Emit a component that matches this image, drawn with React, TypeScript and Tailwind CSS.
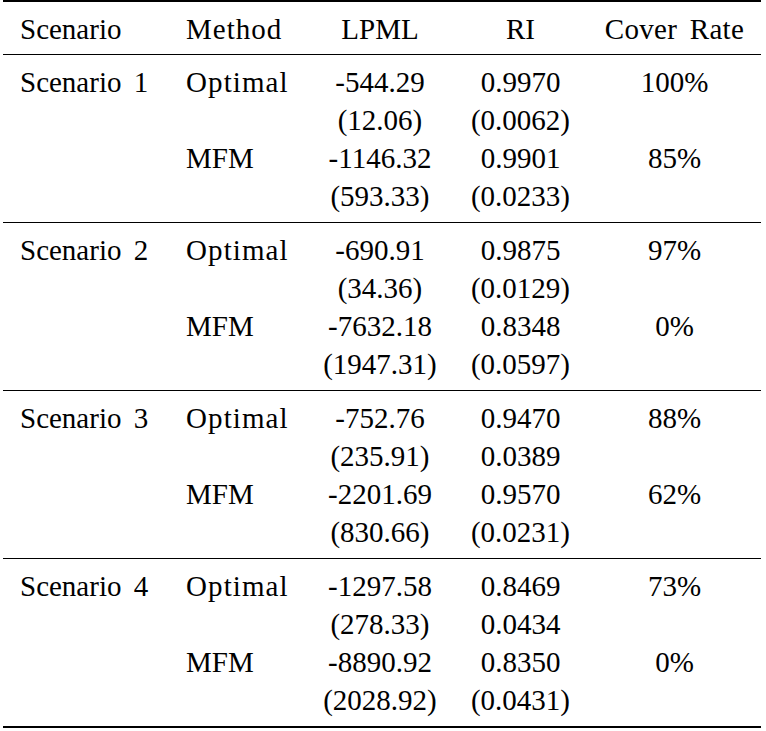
import { Fragment } from 'react'

const sections = [
  {
    name: 'Scenario 1',
    rows: [
      { method: 'Optimal', lpml: '-544.29', lpmlSd: '(12.06)', ri: '0.9970', riSd: '(0.0062)', cover: '100%' },
      { method: 'MFM', lpml: '-1146.32', lpmlSd: '(593.33)', ri: '0.9901', riSd: '(0.0233)', cover: '85%' },
    ],
  },
  {
    name: 'Scenario 2',
    rows: [
      { method: 'Optimal', lpml: '-690.91', lpmlSd: '(34.36)', ri: '0.9875', riSd: '(0.0129)', cover: '97%' },
      { method: 'MFM', lpml: '-7632.18', lpmlSd: '(1947.31)', ri: '0.8348', riSd: '(0.0597)', cover: '0%' },
    ],
  },
  {
    name: 'Scenario 3',
    rows: [
      { method: 'Optimal', lpml: '-752.76', lpmlSd: '(235.91)', ri: '0.9470', riSd: '0.0389', cover: '88%' },
      { method: 'MFM', lpml: '-2201.69', lpmlSd: '(830.66)', ri: '0.9570', riSd: '(0.0231)', cover: '62%' },
    ],
  },
  {
    name: 'Scenario 4',
    rows: [
      { method: 'Optimal', lpml: '-1297.58', lpmlSd: '(278.33)', ri: '0.8469', riSd: '0.0434', cover: '73%' },
      { method: 'MFM', lpml: '-8890.92', lpmlSd: '(2028.92)', ri: '0.8350', riSd: '(0.0431)', cover: '0%' },
    ],
  },
]

const grid = 'grid grid-cols-[166px_138px_146px_135px_173px] leading-[38px]'

export default function App() {
  return (
    <div className="bg-white w-[766px] h-[731px] text-[29px] text-black font-['Liberation_Serif','Times_New_Roman',serif]">
      <div className="ml-[3px] w-[758px]">
        <div className="h-[2px] bg-black" />
        <div className={`${grid} pt-2 pb-[6px]`}>
          <div className="pl-[17px]">Scenario</div>
          <div className="pl-[17px] tracking-[1px]">Method</div>
          <div className="text-center">LPML</div>
          <div className="text-center">RI</div>
          <div className="text-center tracking-[0.3px] [word-spacing:5px]">Cover Rate</div>
        </div>
        <div className="h-px bg-black" />
        {sections.map((s, si) => (
          <div key={s.name}>
            <div className={`${grid} pt-2 pb-[7px]`}>
              {s.rows.map((r, i) => (
                <Fragment key={r.method}>
                  <div className="pl-[17px] [word-spacing:5px]">{i === 0 ? s.name : ''}</div>
                  <div className={r.method === 'Optimal' ? 'pl-[17px] tracking-[1.1px]' : 'pl-[17px]'}>{r.method}</div>
                  <div className="text-center">{r.lpml}</div>
                  <div className="text-center">{r.ri}</div>
                  <div className="text-center">{r.cover}</div>
                  <div />
                  <div />
                  <div className="text-center">{r.lpmlSd}</div>
                  <div className="text-center">{r.riSd}</div>
                  <div />
                </Fragment>
              ))}
            </div>
            {si < sections.length - 1
              ? <div className="h-px bg-black" />
              : <div className="h-[2px] bg-black" />}
          </div>
        ))}
      </div>
    </div>
  )
}
